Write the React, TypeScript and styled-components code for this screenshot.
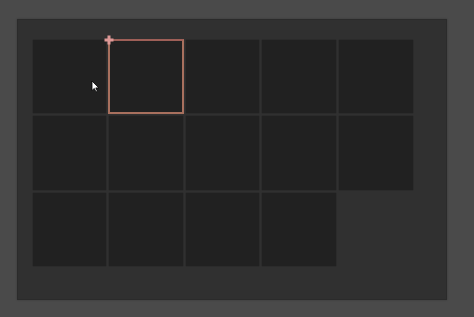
import React from "react";
import styled, { createGlobalStyle } from "styled-components";

const GlobalStyle = createGlobalStyle`
  html, body {
    margin: 0;
    padding: 0;
    background: #4a4a4a;
    font-family: "Liberation Sans", Arial, sans-serif;
  }
`;

const Page = styled.div`
  width: 474px;
  height: 317px;
  padding: 19px 0 0 17px;
  box-sizing: border-box;
`;

const Panel = styled.div`
  position: relative;
  width: 430px;
  height: 281px;
  box-sizing: border-box;
  padding: 20px 0 0 15px;
  background: #303030;
  border: 1px solid #2b2b2b;
  box-shadow: 0 0 2px rgba(0, 0, 0, 0.25);
`;

const Grid = styled.div`
  display: grid;
  grid-template-columns: 73px 74px 73px 74px 74px;
  grid-template-rows: 73px 74px 73px;
  gap: 3px;
`;

const Cell = styled.div<{ $selected?: boolean }>`
  position: relative;
  background: #212121;
  box-shadow: 0 0 1px rgba(0, 0, 0, 0.5);

  &::after {
    content: "";
    display: ${({ $selected }) => ($selected ? "block" : "none")};
    position: absolute;
    inset: -1px;
    border: 2px solid #a8705e;
    border-top-color: #9e5f57;
  }
`;

const Plus = styled.svg`
  position: absolute;
  z-index: 1;
  left: -6px;
  top: -6px;
  width: 12px;
  height: 12px;
`;

const Cursor = styled.svg`
  position: absolute;
  left: 73px;
  top: 60px;
  width: 9px;
  height: 13px;
`;

const cells = Array.from({ length: 14 }, (_, i) => i);

export default function App() {
  return (
    <>
      <GlobalStyle />
      <Page>
        <Panel>
          <Grid>
            {cells.map((i) => (
              <Cell key={i} $selected={i === 1}>
                {i === 1 && (
                  <Plus viewBox="0 0 12 12">
                    <rect x="1.5" y="4.5" width="9" height="3" fill="#dd9896" />
                    <rect x="4.5" y="1.5" width="3" height="9" fill="#dd9896" />
                  </Plus>
                )}
              </Cell>
            ))}
          </Grid>
          <Cursor viewBox="0 0 9 13">
            <path
              d="M1 1 L1 10.5 L3.3 8.4 L5 12 L6.4 11.3 L4.8 7.9 L7.8 7.9 Z"
              fill="#ffffff"
              stroke="#000000"
              strokeWidth="0.8"
              strokeLinejoin="round"
            />
          </Cursor>
        </Panel>
      </Page>
    </>
  );
}
